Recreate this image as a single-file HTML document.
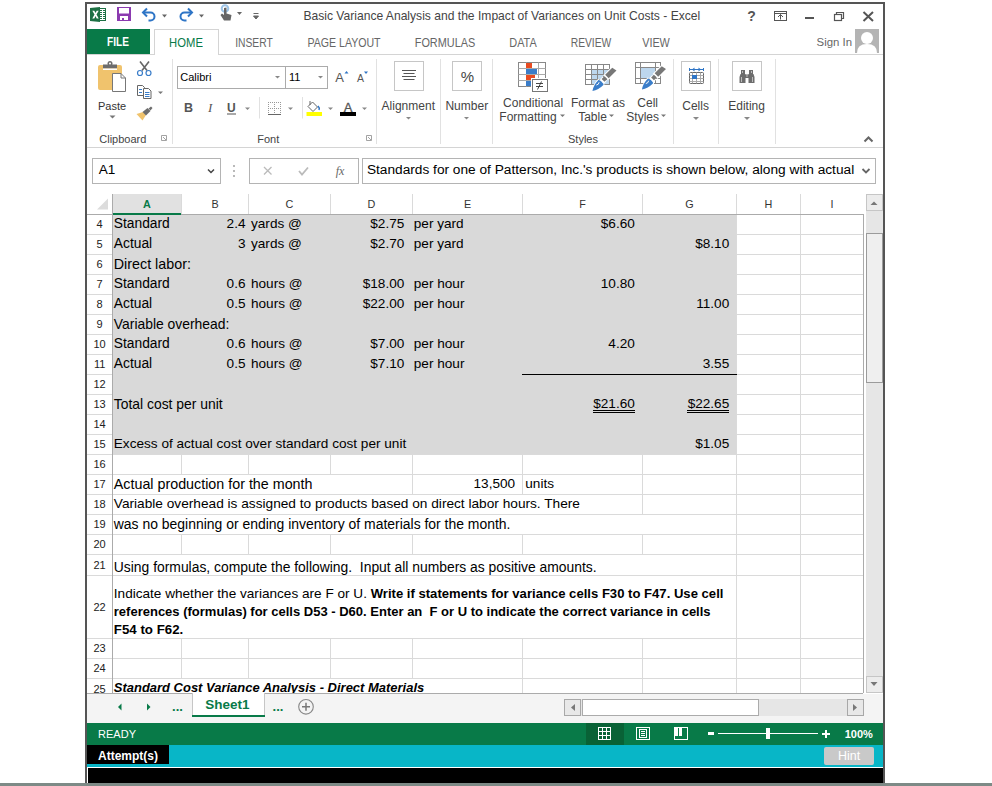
<!DOCTYPE html>
<html><head><meta charset="utf-8"><style>
html,body{margin:0;padding:0;width:992px;height:786px;overflow:hidden;background:#fff;}
body{position:relative;font-family:"Liberation Sans", sans-serif;}
.t{position:absolute;white-space:nowrap;font-family:"Liberation Sans", sans-serif;}
.r{position:absolute;}
svg{position:absolute;left:0;top:0;}
</style></head><body>
<div class="r" style="left:0px;top:0px;width:992px;height:786px;background:#fff;"></div>
<div class="r" style="left:85px;top:2px;width:800px;height:781px;background:#fff;"></div>
<div class="r" style="left:0px;top:783px;width:992px;height:3px;background:#7d8a86;"></div>
<div class="t" style="left:303.40px;top:5.51px;font-size:12.1px;line-height:20px;color:#444;font-weight:normal;font-style:normal;font-family:'Liberation Sans', sans-serif;">Basic Variance Analysis and the Impact of Variances on Unit Costs - Excel</div>
<div class="r" style="left:87px;top:29px;width:63px;height:25px;background:#087a48;"></div>
<div class="t" style="left:-182.40px;width:600px;text-align:center;top:32.03px;font-size:12.6px;line-height:20px;color:#fff;font-weight:normal;font-style:normal;font-family:'Liberation Sans', sans-serif;transform:scaleX(0.80);font-weight:bold;">FILE</div>
<div class="r" style="left:154px;top:29px;width:65px;height:26px;background:#fff;box-sizing:border-box;border:1px solid #d4d4d4;border-bottom:none;"></div>
<div class="t" style="left:-113.60px;width:600px;text-align:center;top:32.93px;font-size:12.6px;line-height:20px;color:#087a48;font-weight:normal;font-style:normal;font-family:'Liberation Sans', sans-serif;transform:scaleX(0.894);">HOME</div>
<div class="t" style="left:-45.70px;width:600px;text-align:center;top:32.93px;font-size:12.6px;line-height:20px;color:#666;font-weight:normal;font-style:normal;font-family:'Liberation Sans', sans-serif;transform:scaleX(0.818);">INSERT</div>
<div class="t" style="left:44.40px;width:600px;text-align:center;top:32.93px;font-size:12.6px;line-height:20px;color:#666;font-weight:normal;font-style:normal;font-family:'Liberation Sans', sans-serif;transform:scaleX(0.841);">PAGE LAYOUT</div>
<div class="t" style="left:145.35px;width:600px;text-align:center;top:32.93px;font-size:12.6px;line-height:20px;color:#666;font-weight:normal;font-style:normal;font-family:'Liberation Sans', sans-serif;transform:scaleX(0.864);">FORMULAS</div>
<div class="t" style="left:223.25px;width:600px;text-align:center;top:32.93px;font-size:12.6px;line-height:20px;color:#666;font-weight:normal;font-style:normal;font-family:'Liberation Sans', sans-serif;transform:scaleX(0.867);">DATA</div>
<div class="t" style="left:290.50px;width:600px;text-align:center;top:32.93px;font-size:12.6px;line-height:20px;color:#666;font-weight:normal;font-style:normal;font-family:'Liberation Sans', sans-serif;transform:scaleX(0.817);">REVIEW</div>
<div class="t" style="left:355.85px;width:600px;text-align:center;top:32.93px;font-size:12.6px;line-height:20px;color:#666;font-weight:normal;font-style:normal;font-family:'Liberation Sans', sans-serif;transform:scaleX(0.860);">VIEW</div>
<div class="r" style="left:87px;top:54px;width:67px;height:1px;background:#d4d4d4;"></div>
<div class="r" style="left:218px;top:54px;width:665px;height:1px;background:#d4d4d4;"></div>
<div class="t" style="right:140.00px;top:31.95px;font-size:11.4px;line-height:20px;color:#666;font-weight:normal;font-style:normal;font-family:'Liberation Sans', sans-serif;">Sign In</div>
<div class="r" style="left:855px;top:29px;width:24px;height:24px;background:#b4b4b4;"></div>
<div class="r" style="left:87px;top:147px;width:796px;height:1px;background:#d4d4d4;"></div>
<div class="r" style="left:172px;top:59px;width:1px;height:85px;background:#e1e1e1;"></div>
<div class="r" style="left:376px;top:59px;width:1px;height:85px;background:#e1e1e1;"></div>
<div class="r" style="left:440px;top:59px;width:1px;height:85px;background:#e1e1e1;"></div>
<div class="r" style="left:492px;top:59px;width:1px;height:85px;background:#e1e1e1;"></div>
<div class="r" style="left:673px;top:59px;width:1px;height:85px;background:#e1e1e1;"></div>
<div class="r" style="left:718px;top:59px;width:1px;height:85px;background:#e1e1e1;"></div>
<div class="r" style="left:775px;top:59px;width:1px;height:85px;background:#e1e1e1;"></div>
<div class="t" style="left:-177.20px;width:600px;text-align:center;top:129.19px;font-size:11px;line-height:20px;color:#444;font-weight:normal;font-style:normal;font-family:'Liberation Sans', sans-serif;">Clipboard</div>
<div class="t" style="left:-31.80px;width:600px;text-align:center;top:129.19px;font-size:11px;line-height:20px;color:#444;font-weight:normal;font-style:normal;font-family:'Liberation Sans', sans-serif;">Font</div>
<div class="t" style="left:283.00px;width:600px;text-align:center;top:129.19px;font-size:11px;line-height:20px;color:#444;font-weight:normal;font-style:normal;font-family:'Liberation Sans', sans-serif;">Styles</div>
<div class="t" style="left:-188.00px;width:600px;text-align:center;top:96.09px;font-size:11px;line-height:20px;color:#333;font-weight:normal;font-style:normal;font-family:'Liberation Sans', sans-serif;">Paste</div>
<div class="r" style="left:177px;top:66px;width:109px;height:23px;background:#fff;box-sizing:border-box;border:1px solid #ababab;"></div>
<div class="r" style="left:285px;top:66px;width:43px;height:23px;background:#fff;box-sizing:border-box;border:1px solid #ababab;"></div>
<div class="t" style="left:180.20px;top:66.69px;font-size:11px;line-height:20px;color:#000;font-weight:normal;font-style:normal;font-family:'Liberation Sans', sans-serif;">Calibri</div>
<div class="t" style="left:289.00px;top:66.69px;font-size:11px;line-height:20px;color:#000;font-weight:normal;font-style:normal;font-family:'Liberation Sans', sans-serif;">11</div>
<div class="t" style="left:-111.50px;width:600px;text-align:center;top:97.87px;font-size:12.5px;line-height:20px;color:#555;font-weight:bold;font-style:normal;font-family:'Liberation Sans', sans-serif;">B</div>
<div class="t" style="left:-89.80px;width:600px;text-align:center;top:97.70px;font-size:13px;line-height:20px;color:#555;font-weight:normal;font-style:italic;font-family:'Liberation Serif', serif;">I</div>
<div class="t" style="left:-68.70px;width:600px;text-align:center;top:98.04px;font-size:12px;line-height:20px;color:#555;font-weight:bold;font-style:normal;font-family:'Liberation Sans', sans-serif;">U</div>
<div class="r" style="left:394px;top:61px;width:30px;height:30px;background:#fff;box-sizing:border-box;border:1px solid #c6c6c6;"></div>
<div class="r" style="left:452px;top:61px;width:30px;height:30px;background:#fff;box-sizing:border-box;border:1px solid #c6c6c6;"></div>
<div class="t" style="left:167.50px;width:600px;text-align:center;top:66.80px;font-size:15px;line-height:20px;color:#444;font-weight:normal;font-style:normal;font-family:'Liberation Sans', sans-serif;">%</div>
<div class="t" style="left:108.30px;width:600px;text-align:center;top:95.54px;font-size:12px;line-height:20px;color:#444;font-weight:normal;font-style:normal;font-family:'Liberation Sans', sans-serif;">Alignment</div>
<div class="t" style="left:166.80px;width:600px;text-align:center;top:95.54px;font-size:12px;line-height:20px;color:#444;font-weight:normal;font-style:normal;font-family:'Liberation Sans', sans-serif;">Number</div>
<div class="t" style="left:233.10px;width:600px;text-align:center;top:92.94px;font-size:12px;line-height:20px;color:#444;font-weight:normal;font-style:normal;font-family:'Liberation Sans', sans-serif;">Conditional</div>
<div class="t" style="left:228.00px;width:600px;text-align:center;top:106.84px;font-size:12px;line-height:20px;color:#444;font-weight:normal;font-style:normal;font-family:'Liberation Sans', sans-serif;">Formatting</div>
<div class="t" style="left:298.00px;width:600px;text-align:center;top:92.94px;font-size:12px;line-height:20px;color:#444;font-weight:normal;font-style:normal;font-family:'Liberation Sans', sans-serif;">Format as</div>
<div class="t" style="left:292.50px;width:600px;text-align:center;top:106.84px;font-size:12px;line-height:20px;color:#444;font-weight:normal;font-style:normal;font-family:'Liberation Sans', sans-serif;">Table</div>
<div class="t" style="left:347.70px;width:600px;text-align:center;top:92.94px;font-size:12px;line-height:20px;color:#444;font-weight:normal;font-style:normal;font-family:'Liberation Sans', sans-serif;">Cell</div>
<div class="t" style="left:342.70px;width:600px;text-align:center;top:106.84px;font-size:12px;line-height:20px;color:#444;font-weight:normal;font-style:normal;font-family:'Liberation Sans', sans-serif;">Styles</div>
<div class="r" style="left:681px;top:61px;width:30px;height:30px;background:#fff;box-sizing:border-box;border:1px solid #c6c6c6;"></div>
<div class="r" style="left:732px;top:61px;width:30px;height:30px;background:#fff;box-sizing:border-box;border:1px solid #c6c6c6;"></div>
<div class="t" style="left:395.60px;width:600px;text-align:center;top:95.74px;font-size:12px;line-height:20px;color:#444;font-weight:normal;font-style:normal;font-family:'Liberation Sans', sans-serif;">Cells</div>
<div class="t" style="left:446.60px;width:600px;text-align:center;top:95.74px;font-size:12px;line-height:20px;color:#444;font-weight:normal;font-style:normal;font-family:'Liberation Sans', sans-serif;">Editing</div>
<div class="r" style="left:92px;top:158px;width:129px;height:26px;background:#fff;box-sizing:border-box;border:1px solid #b4b4b4;"></div>
<div class="t" style="left:98.70px;top:159.89px;font-size:13.6px;line-height:20px;color:#000;font-weight:normal;font-style:normal;font-family:'Liberation Sans', sans-serif;">A1</div>
<div class="r" style="left:249px;top:158px;width:110px;height:26px;background:#fff;box-sizing:border-box;border:1px solid #b4b4b4;"></div>
<div class="r" style="left:362px;top:158px;width:514px;height:26px;background:#fff;box-sizing:border-box;border:1px solid #b4b4b4;"></div>
<div class="t" style="left:366.90px;top:160.05px;font-size:13.7px;line-height:20px;color:#000;font-weight:normal;font-style:normal;font-family:'Liberation Sans', sans-serif;">Standards for one of Patterson, Inc.'s products is shown below, along with actual</div>
<div class="r" style="left:112px;top:194px;width:69px;height:19px;background:#e1e1e1;"></div>
<div class="r" style="left:181px;top:194px;width:1px;height:20px;background:#dadada;"></div>
<div class="r" style="left:248px;top:194px;width:1px;height:20px;background:#dadada;"></div>
<div class="r" style="left:330px;top:194px;width:1px;height:20px;background:#dadada;"></div>
<div class="r" style="left:412px;top:194px;width:1px;height:20px;background:#dadada;"></div>
<div class="r" style="left:522px;top:194px;width:1px;height:20px;background:#dadada;"></div>
<div class="r" style="left:642px;top:194px;width:1px;height:20px;background:#dadada;"></div>
<div class="r" style="left:736px;top:194px;width:1px;height:20px;background:#dadada;"></div>
<div class="r" style="left:800px;top:194px;width:1px;height:20px;background:#dadada;"></div>
<div class="r" style="left:87px;top:214px;width:776px;height:1px;background:#ababab;"></div>
<div class="r" style="left:112px;top:213px;width:69px;height:2px;background:#087a48;"></div>
<div class="t" style="left:-153.00px;width:600px;text-align:center;top:194.26px;font-size:10.8px;line-height:20px;color:#087a48;font-weight:bold;font-style:normal;font-family:'Liberation Sans', sans-serif;">A</div>
<div class="t" style="left:-85.00px;width:600px;text-align:center;top:194.26px;font-size:10.8px;line-height:20px;color:#333;font-weight:normal;font-style:normal;font-family:'Liberation Sans', sans-serif;">B</div>
<div class="t" style="left:-10.50px;width:600px;text-align:center;top:194.26px;font-size:10.8px;line-height:20px;color:#333;font-weight:normal;font-style:normal;font-family:'Liberation Sans', sans-serif;">C</div>
<div class="t" style="left:71.50px;width:600px;text-align:center;top:194.26px;font-size:10.8px;line-height:20px;color:#333;font-weight:normal;font-style:normal;font-family:'Liberation Sans', sans-serif;">D</div>
<div class="t" style="left:167.50px;width:600px;text-align:center;top:194.26px;font-size:10.8px;line-height:20px;color:#333;font-weight:normal;font-style:normal;font-family:'Liberation Sans', sans-serif;">E</div>
<div class="t" style="left:282.50px;width:600px;text-align:center;top:194.26px;font-size:10.8px;line-height:20px;color:#333;font-weight:normal;font-style:normal;font-family:'Liberation Sans', sans-serif;">F</div>
<div class="t" style="left:389.50px;width:600px;text-align:center;top:194.26px;font-size:10.8px;line-height:20px;color:#333;font-weight:normal;font-style:normal;font-family:'Liberation Sans', sans-serif;">G</div>
<div class="t" style="left:468.50px;width:600px;text-align:center;top:194.26px;font-size:10.8px;line-height:20px;color:#333;font-weight:normal;font-style:normal;font-family:'Liberation Sans', sans-serif;">H</div>
<div class="t" style="left:532.00px;width:600px;text-align:center;top:194.26px;font-size:10.8px;line-height:20px;color:#333;font-weight:normal;font-style:normal;font-family:'Liberation Sans', sans-serif;">I</div>
<div class="r" style="left:113px;top:215px;width:623px;height:239px;background:#d9d9d9;"></div>
<div class="r" style="left:87px;top:234px;width:25px;height:1px;background:#dadada;"></div>
<div class="r" style="left:737px;top:234px;width:126px;height:1px;background:#dadada;"></div>
<div class="r" style="left:87px;top:254px;width:25px;height:1px;background:#dadada;"></div>
<div class="r" style="left:737px;top:254px;width:126px;height:1px;background:#dadada;"></div>
<div class="r" style="left:87px;top:274px;width:25px;height:1px;background:#dadada;"></div>
<div class="r" style="left:737px;top:274px;width:126px;height:1px;background:#dadada;"></div>
<div class="r" style="left:87px;top:294px;width:25px;height:1px;background:#dadada;"></div>
<div class="r" style="left:737px;top:294px;width:126px;height:1px;background:#dadada;"></div>
<div class="r" style="left:87px;top:314px;width:25px;height:1px;background:#dadada;"></div>
<div class="r" style="left:737px;top:314px;width:126px;height:1px;background:#dadada;"></div>
<div class="r" style="left:87px;top:334px;width:25px;height:1px;background:#dadada;"></div>
<div class="r" style="left:737px;top:334px;width:126px;height:1px;background:#dadada;"></div>
<div class="r" style="left:87px;top:354px;width:25px;height:1px;background:#dadada;"></div>
<div class="r" style="left:737px;top:354px;width:126px;height:1px;background:#dadada;"></div>
<div class="r" style="left:87px;top:374px;width:25px;height:1px;background:#dadada;"></div>
<div class="r" style="left:737px;top:374px;width:126px;height:1px;background:#dadada;"></div>
<div class="r" style="left:87px;top:394px;width:25px;height:1px;background:#dadada;"></div>
<div class="r" style="left:737px;top:394px;width:126px;height:1px;background:#dadada;"></div>
<div class="r" style="left:87px;top:414px;width:25px;height:1px;background:#dadada;"></div>
<div class="r" style="left:737px;top:414px;width:126px;height:1px;background:#dadada;"></div>
<div class="r" style="left:87px;top:434px;width:25px;height:1px;background:#dadada;"></div>
<div class="r" style="left:737px;top:434px;width:126px;height:1px;background:#dadada;"></div>
<div class="r" style="left:87px;top:454px;width:25px;height:1px;background:#dadada;"></div>
<div class="r" style="left:113px;top:454px;width:750px;height:1px;background:#dadada;"></div>
<div class="r" style="left:87px;top:474px;width:25px;height:1px;background:#dadada;"></div>
<div class="r" style="left:113px;top:474px;width:750px;height:1px;background:#dadada;"></div>
<div class="r" style="left:87px;top:494px;width:25px;height:1px;background:#dadada;"></div>
<div class="r" style="left:113px;top:494px;width:750px;height:1px;background:#dadada;"></div>
<div class="r" style="left:87px;top:514px;width:25px;height:1px;background:#dadada;"></div>
<div class="r" style="left:113px;top:514px;width:750px;height:1px;background:#dadada;"></div>
<div class="r" style="left:87px;top:534px;width:25px;height:1px;background:#dadada;"></div>
<div class="r" style="left:113px;top:534px;width:750px;height:1px;background:#dadada;"></div>
<div class="r" style="left:87px;top:554px;width:25px;height:1px;background:#dadada;"></div>
<div class="r" style="left:113px;top:554px;width:750px;height:1px;background:#dadada;"></div>
<div class="r" style="left:87px;top:575px;width:25px;height:1px;background:#dadada;"></div>
<div class="r" style="left:113px;top:575px;width:750px;height:1px;background:#dadada;"></div>
<div class="r" style="left:87px;top:638px;width:25px;height:1px;background:#dadada;"></div>
<div class="r" style="left:113px;top:638px;width:750px;height:1px;background:#dadada;"></div>
<div class="r" style="left:87px;top:658px;width:25px;height:1px;background:#dadada;"></div>
<div class="r" style="left:113px;top:658px;width:750px;height:1px;background:#dadada;"></div>
<div class="r" style="left:87px;top:678px;width:25px;height:1px;background:#dadada;"></div>
<div class="r" style="left:113px;top:678px;width:750px;height:1px;background:#dadada;"></div>
<div class="r" style="left:87px;top:693px;width:776px;height:1px;background:#ababab;"></div>
<div class="r" style="left:112px;top:194px;width:1px;height:499px;background:#ababab;"></div>
<div class="r" style="left:863px;top:214px;width:1px;height:479px;background:#ababab;"></div>
<div class="r" style="left:736px;top:215px;width:1px;height:478px;background:#dadada;"></div>
<div class="r" style="left:800px;top:215px;width:1px;height:478px;background:#dadada;"></div>
<div class="r" style="left:181px;top:455px;width:1px;height:19px;background:#dadada;"></div>
<div class="r" style="left:248px;top:455px;width:1px;height:19px;background:#dadada;"></div>
<div class="r" style="left:330px;top:455px;width:1px;height:19px;background:#dadada;"></div>
<div class="r" style="left:412px;top:455px;width:1px;height:19px;background:#dadada;"></div>
<div class="r" style="left:522px;top:455px;width:1px;height:19px;background:#dadada;"></div>
<div class="r" style="left:642px;top:455px;width:1px;height:19px;background:#dadada;"></div>
<div class="r" style="left:181px;top:535px;width:1px;height:19px;background:#dadada;"></div>
<div class="r" style="left:248px;top:535px;width:1px;height:19px;background:#dadada;"></div>
<div class="r" style="left:330px;top:535px;width:1px;height:19px;background:#dadada;"></div>
<div class="r" style="left:412px;top:535px;width:1px;height:19px;background:#dadada;"></div>
<div class="r" style="left:522px;top:535px;width:1px;height:19px;background:#dadada;"></div>
<div class="r" style="left:642px;top:535px;width:1px;height:19px;background:#dadada;"></div>
<div class="r" style="left:181px;top:639px;width:1px;height:19px;background:#dadada;"></div>
<div class="r" style="left:248px;top:639px;width:1px;height:19px;background:#dadada;"></div>
<div class="r" style="left:330px;top:639px;width:1px;height:19px;background:#dadada;"></div>
<div class="r" style="left:412px;top:639px;width:1px;height:19px;background:#dadada;"></div>
<div class="r" style="left:522px;top:639px;width:1px;height:19px;background:#dadada;"></div>
<div class="r" style="left:642px;top:639px;width:1px;height:19px;background:#dadada;"></div>
<div class="r" style="left:181px;top:659px;width:1px;height:19px;background:#dadada;"></div>
<div class="r" style="left:248px;top:659px;width:1px;height:19px;background:#dadada;"></div>
<div class="r" style="left:330px;top:659px;width:1px;height:19px;background:#dadada;"></div>
<div class="r" style="left:412px;top:659px;width:1px;height:19px;background:#dadada;"></div>
<div class="r" style="left:522px;top:659px;width:1px;height:19px;background:#dadada;"></div>
<div class="r" style="left:642px;top:659px;width:1px;height:19px;background:#dadada;"></div>
<div class="r" style="left:412px;top:475px;width:1px;height:19px;background:#dadada;"></div>
<div class="r" style="left:522px;top:475px;width:1px;height:19px;background:#dadada;"></div>
<div class="r" style="left:642px;top:475px;width:1px;height:19px;background:#dadada;"></div>
<div class="r" style="left:642px;top:495px;width:1px;height:19px;background:#dadada;"></div>
<div class="r" style="left:522px;top:679px;width:1px;height:14px;background:#dadada;"></div>
<div class="r" style="left:642px;top:679px;width:1px;height:14px;background:#dadada;"></div>
<div class="t" style="left:-200.40px;width:600px;text-align:center;top:214.39px;font-size:11px;line-height:20px;color:#222;font-weight:normal;font-style:normal;font-family:'Liberation Sans', sans-serif;">4</div>
<div class="t" style="left:-200.40px;width:600px;text-align:center;top:234.39px;font-size:11px;line-height:20px;color:#222;font-weight:normal;font-style:normal;font-family:'Liberation Sans', sans-serif;">5</div>
<div class="t" style="left:-200.40px;width:600px;text-align:center;top:254.39px;font-size:11px;line-height:20px;color:#222;font-weight:normal;font-style:normal;font-family:'Liberation Sans', sans-serif;">6</div>
<div class="t" style="left:-200.40px;width:600px;text-align:center;top:274.39px;font-size:11px;line-height:20px;color:#222;font-weight:normal;font-style:normal;font-family:'Liberation Sans', sans-serif;">7</div>
<div class="t" style="left:-200.40px;width:600px;text-align:center;top:294.39px;font-size:11px;line-height:20px;color:#222;font-weight:normal;font-style:normal;font-family:'Liberation Sans', sans-serif;">8</div>
<div class="t" style="left:-200.40px;width:600px;text-align:center;top:314.39px;font-size:11px;line-height:20px;color:#222;font-weight:normal;font-style:normal;font-family:'Liberation Sans', sans-serif;">9</div>
<div class="t" style="left:-200.40px;width:600px;text-align:center;top:334.39px;font-size:11px;line-height:20px;color:#222;font-weight:normal;font-style:normal;font-family:'Liberation Sans', sans-serif;">10</div>
<div class="t" style="left:-200.40px;width:600px;text-align:center;top:354.39px;font-size:11px;line-height:20px;color:#222;font-weight:normal;font-style:normal;font-family:'Liberation Sans', sans-serif;">11</div>
<div class="t" style="left:-200.40px;width:600px;text-align:center;top:374.39px;font-size:11px;line-height:20px;color:#222;font-weight:normal;font-style:normal;font-family:'Liberation Sans', sans-serif;">12</div>
<div class="t" style="left:-200.40px;width:600px;text-align:center;top:394.39px;font-size:11px;line-height:20px;color:#222;font-weight:normal;font-style:normal;font-family:'Liberation Sans', sans-serif;">13</div>
<div class="t" style="left:-200.40px;width:600px;text-align:center;top:414.39px;font-size:11px;line-height:20px;color:#222;font-weight:normal;font-style:normal;font-family:'Liberation Sans', sans-serif;">14</div>
<div class="t" style="left:-200.40px;width:600px;text-align:center;top:434.39px;font-size:11px;line-height:20px;color:#222;font-weight:normal;font-style:normal;font-family:'Liberation Sans', sans-serif;">15</div>
<div class="t" style="left:-200.40px;width:600px;text-align:center;top:454.39px;font-size:11px;line-height:20px;color:#222;font-weight:normal;font-style:normal;font-family:'Liberation Sans', sans-serif;">16</div>
<div class="t" style="left:-200.40px;width:600px;text-align:center;top:474.39px;font-size:11px;line-height:20px;color:#222;font-weight:normal;font-style:normal;font-family:'Liberation Sans', sans-serif;">17</div>
<div class="t" style="left:-200.40px;width:600px;text-align:center;top:494.39px;font-size:11px;line-height:20px;color:#222;font-weight:normal;font-style:normal;font-family:'Liberation Sans', sans-serif;">18</div>
<div class="t" style="left:-200.40px;width:600px;text-align:center;top:514.39px;font-size:11px;line-height:20px;color:#222;font-weight:normal;font-style:normal;font-family:'Liberation Sans', sans-serif;">19</div>
<div class="t" style="left:-200.40px;width:600px;text-align:center;top:534.39px;font-size:11px;line-height:20px;color:#222;font-weight:normal;font-style:normal;font-family:'Liberation Sans', sans-serif;">20</div>
<div class="t" style="left:-200.40px;width:600px;text-align:center;top:554.89px;font-size:11px;line-height:20px;color:#222;font-weight:normal;font-style:normal;font-family:'Liberation Sans', sans-serif;">21</div>
<div class="t" style="left:-200.40px;width:600px;text-align:center;top:596.89px;font-size:11px;line-height:20px;color:#222;font-weight:normal;font-style:normal;font-family:'Liberation Sans', sans-serif;">22</div>
<div class="t" style="left:-200.40px;width:600px;text-align:center;top:638.39px;font-size:11px;line-height:20px;color:#222;font-weight:normal;font-style:normal;font-family:'Liberation Sans', sans-serif;">23</div>
<div class="t" style="left:-200.40px;width:600px;text-align:center;top:658.39px;font-size:11px;line-height:20px;color:#222;font-weight:normal;font-style:normal;font-family:'Liberation Sans', sans-serif;">24</div>
<div class="t" style="left:-200.40px;width:600px;text-align:center;top:678.69px;font-size:11px;line-height:20px;color:#222;font-weight:normal;font-style:normal;font-family:'Liberation Sans', sans-serif;">25</div>
<div class="t" style="left:113.80px;top:214.02px;font-size:13.8px;line-height:20px;color:#000;font-weight:normal;font-style:normal;font-family:'Liberation Sans', sans-serif;">Standard</div>
<div class="t" style="left:113.80px;top:234.02px;font-size:13.8px;line-height:20px;color:#000;font-weight:normal;font-style:normal;font-family:'Liberation Sans', sans-serif;">Actual</div>
<div class="t" style="left:113.80px;top:253.85px;font-size:14.3px;line-height:20px;color:#000;font-weight:normal;font-style:normal;font-family:'Liberation Sans', sans-serif;">Direct labor:</div>
<div class="t" style="left:113.80px;top:274.02px;font-size:13.8px;line-height:20px;color:#000;font-weight:normal;font-style:normal;font-family:'Liberation Sans', sans-serif;">Standard</div>
<div class="t" style="left:113.80px;top:294.02px;font-size:13.8px;line-height:20px;color:#000;font-weight:normal;font-style:normal;font-family:'Liberation Sans', sans-serif;">Actual</div>
<div class="t" style="left:113.80px;top:313.98px;font-size:13.9px;line-height:20px;color:#000;font-weight:normal;font-style:normal;font-family:'Liberation Sans', sans-serif;">Variable overhead:</div>
<div class="t" style="left:113.80px;top:334.02px;font-size:13.8px;line-height:20px;color:#000;font-weight:normal;font-style:normal;font-family:'Liberation Sans', sans-serif;">Standard</div>
<div class="t" style="left:113.80px;top:354.02px;font-size:13.8px;line-height:20px;color:#000;font-weight:normal;font-style:normal;font-family:'Liberation Sans', sans-serif;">Actual</div>
<div class="t" style="left:113.80px;top:393.98px;font-size:13.9px;line-height:20px;color:#000;font-weight:normal;font-style:normal;font-family:'Liberation Sans', sans-serif;">Total cost per unit</div>
<div class="t" style="left:113.80px;top:434.09px;font-size:13.6px;line-height:20px;color:#000;font-weight:normal;font-style:normal;font-family:'Liberation Sans', sans-serif;">Excess of actual cost over standard cost per unit</div>
<div class="t" style="left:113.80px;top:473.85px;font-size:14.3px;line-height:20px;color:#000;font-weight:normal;font-style:normal;font-family:'Liberation Sans', sans-serif;">Actual production for the month</div>
<div class="t" style="left:113.80px;top:494.06px;font-size:13.68px;line-height:20px;color:#000;font-weight:normal;font-style:normal;font-family:'Liberation Sans', sans-serif;">Variable overhead is assigned to products based on direct labor hours. There</div>
<div class="t" style="left:113.80px;top:513.97px;font-size:13.95px;line-height:20px;color:#000;font-weight:normal;font-style:normal;font-family:'Liberation Sans', sans-serif;">was no beginning or ending inventory of materials for the month.</div>
<div class="t" style="right:746.50px;top:214.09px;font-size:13.6px;line-height:20px;color:#000;font-weight:normal;font-style:normal;font-family:'Liberation Sans', sans-serif;">2.4</div>
<div class="t" style="right:746.50px;top:234.09px;font-size:13.6px;line-height:20px;color:#000;font-weight:normal;font-style:normal;font-family:'Liberation Sans', sans-serif;">3</div>
<div class="t" style="right:746.50px;top:274.09px;font-size:13.6px;line-height:20px;color:#000;font-weight:normal;font-style:normal;font-family:'Liberation Sans', sans-serif;">0.6</div>
<div class="t" style="right:746.50px;top:294.09px;font-size:13.6px;line-height:20px;color:#000;font-weight:normal;font-style:normal;font-family:'Liberation Sans', sans-serif;">0.5</div>
<div class="t" style="right:746.50px;top:334.09px;font-size:13.6px;line-height:20px;color:#000;font-weight:normal;font-style:normal;font-family:'Liberation Sans', sans-serif;">0.6</div>
<div class="t" style="right:746.50px;top:354.09px;font-size:13.6px;line-height:20px;color:#000;font-weight:normal;font-style:normal;font-family:'Liberation Sans', sans-serif;">0.5</div>
<div class="t" style="left:251.00px;top:214.09px;font-size:13.6px;line-height:20px;color:#000;font-weight:normal;font-style:normal;font-family:'Liberation Sans', sans-serif;">yards @</div>
<div class="t" style="left:251.00px;top:234.09px;font-size:13.6px;line-height:20px;color:#000;font-weight:normal;font-style:normal;font-family:'Liberation Sans', sans-serif;">yards @</div>
<div class="t" style="left:251.00px;top:274.09px;font-size:13.6px;line-height:20px;color:#000;font-weight:normal;font-style:normal;font-family:'Liberation Sans', sans-serif;">hours @</div>
<div class="t" style="left:251.00px;top:294.09px;font-size:13.6px;line-height:20px;color:#000;font-weight:normal;font-style:normal;font-family:'Liberation Sans', sans-serif;">hours @</div>
<div class="t" style="left:251.00px;top:334.09px;font-size:13.6px;line-height:20px;color:#000;font-weight:normal;font-style:normal;font-family:'Liberation Sans', sans-serif;">hours @</div>
<div class="t" style="left:251.00px;top:354.09px;font-size:13.6px;line-height:20px;color:#000;font-weight:normal;font-style:normal;font-family:'Liberation Sans', sans-serif;">hours @</div>
<div class="t" style="right:587.70px;top:214.09px;font-size:13.6px;line-height:20px;color:#000;font-weight:normal;font-style:normal;font-family:'Liberation Sans', sans-serif;">$2.75</div>
<div class="t" style="right:587.70px;top:234.09px;font-size:13.6px;line-height:20px;color:#000;font-weight:normal;font-style:normal;font-family:'Liberation Sans', sans-serif;">$2.70</div>
<div class="t" style="right:587.70px;top:274.09px;font-size:13.6px;line-height:20px;color:#000;font-weight:normal;font-style:normal;font-family:'Liberation Sans', sans-serif;">$18.00</div>
<div class="t" style="right:587.70px;top:294.09px;font-size:13.6px;line-height:20px;color:#000;font-weight:normal;font-style:normal;font-family:'Liberation Sans', sans-serif;">$22.00</div>
<div class="t" style="right:587.70px;top:334.09px;font-size:13.6px;line-height:20px;color:#000;font-weight:normal;font-style:normal;font-family:'Liberation Sans', sans-serif;">$7.00</div>
<div class="t" style="right:587.70px;top:354.09px;font-size:13.6px;line-height:20px;color:#000;font-weight:normal;font-style:normal;font-family:'Liberation Sans', sans-serif;">$7.10</div>
<div class="t" style="left:413.80px;top:214.09px;font-size:13.6px;line-height:20px;color:#000;font-weight:normal;font-style:normal;font-family:'Liberation Sans', sans-serif;">per yard</div>
<div class="t" style="left:413.80px;top:234.09px;font-size:13.6px;line-height:20px;color:#000;font-weight:normal;font-style:normal;font-family:'Liberation Sans', sans-serif;">per yard</div>
<div class="t" style="left:413.80px;top:274.09px;font-size:13.6px;line-height:20px;color:#000;font-weight:normal;font-style:normal;font-family:'Liberation Sans', sans-serif;">per hour</div>
<div class="t" style="left:413.80px;top:294.09px;font-size:13.6px;line-height:20px;color:#000;font-weight:normal;font-style:normal;font-family:'Liberation Sans', sans-serif;">per hour</div>
<div class="t" style="left:413.80px;top:334.09px;font-size:13.6px;line-height:20px;color:#000;font-weight:normal;font-style:normal;font-family:'Liberation Sans', sans-serif;">per hour</div>
<div class="t" style="left:413.80px;top:354.09px;font-size:13.6px;line-height:20px;color:#000;font-weight:normal;font-style:normal;font-family:'Liberation Sans', sans-serif;">per hour</div>
<div class="t" style="right:357.20px;top:214.09px;font-size:13.6px;line-height:20px;color:#000;font-weight:normal;font-style:normal;font-family:'Liberation Sans', sans-serif;">$6.60</div>
<div class="t" style="right:357.20px;top:274.09px;font-size:13.6px;line-height:20px;color:#000;font-weight:normal;font-style:normal;font-family:'Liberation Sans', sans-serif;">10.80</div>
<div class="t" style="right:357.20px;top:334.09px;font-size:13.6px;line-height:20px;color:#000;font-weight:normal;font-style:normal;font-family:'Liberation Sans', sans-serif;">4.20</div>
<div class="t" style="right:357.20px;top:394.09px;font-size:13.6px;line-height:20px;color:#000;font-weight:normal;font-style:normal;font-family:'Liberation Sans', sans-serif;">$21.60</div>
<div class="t" style="right:262.80px;top:234.09px;font-size:13.6px;line-height:20px;color:#000;font-weight:normal;font-style:normal;font-family:'Liberation Sans', sans-serif;">$8.10</div>
<div class="t" style="right:262.80px;top:294.09px;font-size:13.6px;line-height:20px;color:#000;font-weight:normal;font-style:normal;font-family:'Liberation Sans', sans-serif;">11.00</div>
<div class="t" style="right:262.80px;top:354.09px;font-size:13.6px;line-height:20px;color:#000;font-weight:normal;font-style:normal;font-family:'Liberation Sans', sans-serif;">3.55</div>
<div class="t" style="right:262.80px;top:394.09px;font-size:13.6px;line-height:20px;color:#000;font-weight:normal;font-style:normal;font-family:'Liberation Sans', sans-serif;">$22.65</div>
<div class="t" style="right:262.80px;top:434.09px;font-size:13.6px;line-height:20px;color:#000;font-weight:normal;font-style:normal;font-family:'Liberation Sans', sans-serif;">$1.05</div>
<div class="r" style="left:522px;top:374px;width:215px;height:1px;background:#000;"></div>
<div class="r" style="left:593px;top:410px;width:42px;height:1px;background:#000;"></div>
<div class="r" style="left:593px;top:412px;width:42px;height:1px;background:#000;"></div>
<div class="r" style="left:687px;top:410px;width:42px;height:1px;background:#000;"></div>
<div class="r" style="left:687px;top:412px;width:42px;height:1px;background:#000;"></div>
<div class="t" style="right:476.90px;top:474.09px;font-size:13.6px;line-height:20px;color:#000;font-weight:normal;font-style:normal;font-family:'Liberation Sans', sans-serif;">13,500</div>
<div class="t" style="left:525.30px;top:474.09px;font-size:13.6px;line-height:20px;color:#000;font-weight:normal;font-style:normal;font-family:'Liberation Sans', sans-serif;">units</div>
<div class="t" style="left:113.80px;top:556.99px;font-size:13.88px;line-height:20px;color:#000;font-weight:normal;font-style:normal;font-family:'Liberation Sans', sans-serif;">Using formulas, compute the following. &nbsp;Input all numbers as positive amounts.</div>
<div class="t" style="left:113.80px;top:583.99px;font-size:13.6px;line-height:20px;color:#000;font-weight:normal;font-style:normal;font-family:'Liberation Sans', sans-serif;">Indicate whether the variances are F or U. <b style="font-size:13.1px">Write if statements for variance cells F30 to F47. Use cell</b></div>
<div class="t" style="left:113.80px;top:602.00px;font-size:13.0px;line-height:20px;color:#000;font-weight:bold;font-style:normal;font-family:'Liberation Sans', sans-serif;">references (formulas) for cells D53 - D60. Enter an &nbsp;F or U to indicate the correct variance in cells</div>
<div class="t" style="left:113.80px;top:620.09px;font-size:13.3px;line-height:20px;color:#000;font-weight:bold;font-style:normal;font-family:'Liberation Sans', sans-serif;">F54 to F62.</div>
<div class="r" style="left:113px;top:679px;width:750px;height:14px;overflow:hidden">
<div class="t" style="left:0.80px;top:-1.19px;font-size:12.97px;line-height:20px;color:#000;font-weight:bold;font-style:italic;font-family:'Liberation Sans', sans-serif;">Standard Cost Variance Analysis - Direct Materials</div>
</div>
<div class="r" style="left:866px;top:194px;width:17px;height:499px;background:#e6e6e6;"></div>
<div class="r" style="left:866px;top:194px;width:17px;height:17px;background:#ececec;box-sizing:border-box;border:1px solid #c6c6c6;"></div>
<div class="r" style="left:866px;top:233px;width:17px;height:150px;background:#efefef;box-sizing:border-box;border:1px solid #9b9b9b;"></div>
<div class="r" style="left:866px;top:676px;width:17px;height:17px;background:#ececec;box-sizing:border-box;border:1px solid #c6c6c6;"></div>
<div class="r" style="left:87px;top:694px;width:796px;height:29px;background:#f4f4f4;"></div>
<div class="r" style="left:192px;top:693px;width:73px;height:24px;background:#fff;box-sizing:border-box;border:1px solid #c6c6c6;border-top:none;"></div>
<div class="r" style="left:192px;top:715px;width:73px;height:2px;background:#087a48;"></div>
<div class="t" style="left:-72.60px;width:600px;text-align:center;top:695.22px;font-size:13.5px;line-height:20px;color:#087a48;font-weight:bold;font-style:normal;font-family:'Liberation Sans', sans-serif;">Sheet1</div>
<div class="t" style="left:-122.50px;width:600px;text-align:center;top:696.50px;font-size:13px;line-height:20px;color:#087a48;font-weight:bold;font-style:normal;font-family:'Liberation Sans', sans-serif;">...</div>
<div class="t" style="left:-22.00px;width:600px;text-align:center;top:696.50px;font-size:13px;line-height:20px;color:#087a48;font-weight:bold;font-style:normal;font-family:'Liberation Sans', sans-serif;">...</div>
<div class="r" style="left:564px;top:699px;width:17px;height:17px;background:#e8e8e8;box-sizing:border-box;border:1px solid #a8a8a8;"></div>
<div class="r" style="left:581px;top:699px;width:266px;height:17px;background:#e6e6e6;"></div>
<div class="r" style="left:582px;top:699px;width:177px;height:17px;background:#fff;box-sizing:border-box;border:1px solid #ababab;"></div>
<div class="r" style="left:847px;top:699px;width:17px;height:17px;background:#e8e8e8;box-sizing:border-box;border:1px solid #a8a8a8;"></div>
<div class="r" style="left:87px;top:723px;width:796px;height:22px;background:#087a48;"></div>
<div class="r" style="left:586px;top:723px;width:38px;height:22px;background:#096236;"></div>
<div class="t" style="left:98.10px;top:724.39px;font-size:11px;line-height:20px;color:#fff;font-weight:normal;font-style:normal;font-family:'Liberation Sans', sans-serif;">READY</div>
<div class="t" style="right:119.20px;top:724.29px;font-size:11px;line-height:20px;color:#fff;font-weight:bold;font-style:normal;font-family:'Liberation Sans', sans-serif;">100%</div>
<div class="r" style="left:718px;top:733px;width:100px;height:1px;background:#fff;"></div>
<div class="r" style="left:766px;top:728px;width:4px;height:11px;background:#fff;"></div>
<div class="r" style="left:708px;top:732px;width:6px;height:3px;background:#fff;"></div>
<div class="r" style="left:822px;top:733px;width:8px;height:2px;background:#fff;"></div>
<div class="r" style="left:825px;top:730px;width:2px;height:8px;background:#fff;"></div>
<div class="r" style="left:87px;top:745px;width:796px;height:22px;background:#08b6c7;"></div>
<div class="r" style="left:87px;top:745px;width:82px;height:19px;background:#000;"></div>
<div class="t" style="left:98.00px;top:745.84px;font-size:12px;line-height:20px;color:#fff;font-weight:bold;font-style:normal;font-family:'Liberation Sans', sans-serif;">Attempt(s)</div>
<div class="r" style="left:824px;top:747px;width:50px;height:18px;background:#c9c9c9;border-radius:2px;"></div>
<div class="t" style="left:549.00px;width:600px;text-align:center;top:746.37px;font-size:12.5px;line-height:20px;color:#fff;font-weight:normal;font-style:normal;font-family:'Liberation Sans', sans-serif;">Hint</div>
<div class="r" style="left:87px;top:767px;width:796px;height:1px;background:#fff;"></div>
<div class="r" style="left:88px;top:768px;width:795px;height:15px;background:#000;"></div>
<div class="r" style="left:85px;top:2px;width:800px;height:2px;background:#555;"></div>
<div class="r" style="left:85px;top:2px;width:2px;height:781px;background:#555;"></div>
<div class="r" style="left:883px;top:2px;width:2px;height:781px;background:#555;"></div>
<svg width="992" height="786" viewBox="0 0 992 786">
<!-- excel logo -->
<rect x="99.5" y="8.5" width="6" height="12" fill="#fff" stroke="#1d7044" stroke-width="1"/>
<g fill="#1d7044"><rect x="100" y="10" width="2" height="1"/><rect x="103" y="10" width="2" height="1"/><rect x="100" y="12" width="2" height="1"/><rect x="103" y="12" width="2" height="1"/><rect x="100" y="14" width="2" height="1"/><rect x="103" y="14" width="2" height="1"/><rect x="100" y="16" width="2" height="1"/><rect x="103" y="16" width="2" height="1"/><rect x="100" y="18" width="2" height="1"/><rect x="103" y="18" width="2" height="1"/></g>
<path d="M90 8 L100 7 V22 L90 21Z" fill="#1d7044"/>
<path d="M92.3 10.8 h2 l1.2 2.3 l1.2 -2.3 h2 l-2.2 3.8 l2.2 3.9 h-2 l-1.2 -2.4 l-1.2 2.4 h-2 l2.2 -3.9z" fill="#fff"/>
<!-- save -->
<path d="M117 7h14v14h-14z" fill="#8b3ab0"/>
<rect x="119" y="8" width="10" height="5.5" fill="#fff"/>
<rect x="120" y="16" width="8" height="4" fill="#fff"/>
<rect x="122" y="18" width="2" height="2" fill="#8b3ab0"/>
<!-- undo -->
<path d="M147 8.5 l-4 4 l4 4" fill="none" stroke="#2e75c6" stroke-width="2"/>
<path d="M143.5 12.5 H150.5 a4 4 0 0 1 0 8 h-2" fill="none" stroke="#2e75c6" stroke-width="2"/>
<path d="M162 14.5h5l-2.5 3z" fill="#666"/>
<!-- redo -->
<path d="M188 8.5 l4 4 l-4 4" fill="none" stroke="#2e75c6" stroke-width="2"/>
<path d="M191.5 12.5 H184.5 a4 4 0 0 0 0 8 h2" fill="none" stroke="#2e75c6" stroke-width="2"/>
<path d="M199 14.5h5l-2.5 3z" fill="#666"/>
<!-- touch -->
<circle cx="225" cy="8.5" r="3.3" fill="none" stroke="#9cc3e6" stroke-width="2"/>
<path d="M224 8 v7 l-2 -1.5 l-1.5 1.5 l3.5 5.5 h6.5 l1 -5.5 l-5 -1.5 v-6z" fill="#666"/>
<path d="M237 12h5l-2.5 3z" fill="#666"/>
<path d="M253.5 13.5h5M253.5 16h5l-2.5 3z" fill="#666" stroke="#666" stroke-width="1"/>
<!-- title right icons -->
<text x="751.5" y="21" font-family="Liberation Sans" font-weight="bold" font-size="14" fill="#555" text-anchor="middle">?</text>
<rect x="774.5" y="11.5" width="12" height="9" fill="none" stroke="#555" stroke-width="1"/>
<path d="M774.5 13.5h12" stroke="#555" stroke-width="1"/>
<path d="M780.5 19.5v-5M778 17l2.5-2.5 2.5 2.5" fill="none" stroke="#555" stroke-width="1"/>
<rect x="805" y="17" width="9" height="2" fill="#555"/>
<rect x="834.5" y="14.5" width="7" height="6" fill="none" stroke="#555" stroke-width="1.2"/>
<path d="M836.5 14.5v-2h7v6h-2" fill="none" stroke="#555" stroke-width="1.2"/>
<path d="M863.5 12l9.5 9M873 12l-9.5 9" stroke="#555" stroke-width="2"/>
<!-- avatar -->
<circle cx="867" cy="38" r="6" fill="#fff"/>
<path d="M857 53 q0 -9 10 -9 q10 0 10 9z" fill="#fff"/>
<!-- paste -->
<rect x="98" y="65" width="24" height="25" rx="2" fill="#f0c36d"/>
<rect x="103" y="64.5" width="14" height="4" fill="#6d6d6d"/>
<circle cx="110" cy="63.5" r="2.5" fill="#6d6d6d"/>
<circle cx="110" cy="63.5" r="1" fill="#fff"/>
<rect x="103" y="68.5" width="14" height="1.5" fill="#fff"/>
<path d="M112.5 73.5 h8.5 l4.5 4.5 v13.5 h-13z" fill="#fff" stroke="#777" stroke-width="1"/>
<path d="M121 73.5 v4.5 h4.5" fill="none" stroke="#777" stroke-width="1"/>
<path d="M109.5 115.5h6l-3 3z" fill="#777"/>
<!-- scissors -->
<path d="M140 61.5 l7 9 M149 61.5 l-7 9" stroke="#666" stroke-width="1.6"/>
<circle cx="140" cy="73" r="2.5" fill="none" stroke="#3a7dc9" stroke-width="1.2"/>
<circle cx="148.5" cy="73" r="2.5" fill="none" stroke="#3a7dc9" stroke-width="1.2"/>
<!-- copy -->
<path d="M137.5 85.5 h5 l2 2 v8 h-7z" fill="#fff" stroke="#666" stroke-width="1"/>
<path d="M143.5 88.5 h5 l2.5 2.5 v7.5 h-7.5z" fill="#fff" stroke="#666" stroke-width="1"/>
<path d="M139 89.5h3M139 92.5h3M145 92.5h4.5M145 94.5h4.5M145 96.5h4.5" stroke="#3a7dc9" stroke-width="1"/>
<path d="M158 91.5h5l-2.5 2.5z" fill="#777"/>
<!-- format painter -->
<path d="M136.5 114 l6.5 -2 l3 3 l-3.5 5.5z" fill="#f0c36d"/>
<path d="M142.5 112 l5 -4 l3 3 l-4.5 4.5z" fill="#6d6d6d"/>
<path d="M148.5 108.5 l2.5 -2 l1.5 1.5 l-2 2.5z" fill="#6d6d6d"/>
<!-- font dropdown arrows -->
<path d="M275 76h5l-2.5 2.5z" fill="#888"/>
<path d="M318 76h5l-2.5 2.5z" fill="#888"/>
<!-- grow/shrink font -->
<text x="339.5" y="82" font-family="Liberation Sans" font-size="13" fill="#555" text-anchor="middle">A</text>
<path d="M344.5 73.5h4l-2 -2.5z" fill="#2e75c6"/>
<text x="360.5" y="82" font-family="Liberation Sans" font-size="10.5" fill="#555" text-anchor="middle">A</text>
<path d="M364 71.5h4l-2 2.5z" fill="#2e75c6"/>
<!-- underline bar -->
<rect x="227" y="113.5" width="9" height="1" fill="#555"/>
<path d="M245 107.5h5l-2.5 2.5z" fill="#888"/>
<path d="M259.5 97v21.5" stroke="#e1e1e1" stroke-width="1"/>
<!-- border icon -->
<g fill="#999"><rect x="268" y="102" width="1" height="1"/><rect x="270" y="102" width="1" height="1"/><rect x="272" y="102" width="1" height="1"/><rect x="274" y="102" width="1" height="1"/><rect x="276" y="102" width="1" height="1"/><rect x="278" y="102" width="1" height="1"/><rect x="280" y="102" width="1" height="1"/><rect x="268" y="108" width="1" height="1"/><rect x="270" y="108" width="1" height="1"/><rect x="272" y="108" width="1" height="1"/><rect x="274" y="108" width="1" height="1"/><rect x="276" y="108" width="1" height="1"/><rect x="278" y="108" width="1" height="1"/><rect x="280" y="108" width="1" height="1"/><rect x="268" y="114" width="1" height="1"/><rect x="270" y="114" width="1" height="1"/><rect x="272" y="114" width="1" height="1"/><rect x="274" y="114" width="1" height="1"/><rect x="276" y="114" width="1" height="1"/><rect x="278" y="114" width="1" height="1"/><rect x="280" y="114" width="1" height="1"/><rect x="268" y="102" width="1" height="1"/><rect x="268" y="104" width="1" height="1"/><rect x="268" y="106" width="1" height="1"/><rect x="268" y="108" width="1" height="1"/><rect x="268" y="110" width="1" height="1"/><rect x="268" y="112" width="1" height="1"/><rect x="268" y="114" width="1" height="1"/><rect x="274" y="102" width="1" height="1"/><rect x="274" y="104" width="1" height="1"/><rect x="274" y="106" width="1" height="1"/><rect x="274" y="108" width="1" height="1"/><rect x="274" y="110" width="1" height="1"/><rect x="274" y="112" width="1" height="1"/><rect x="274" y="114" width="1" height="1"/><rect x="280" y="102" width="1" height="1"/><rect x="280" y="104" width="1" height="1"/><rect x="280" y="106" width="1" height="1"/><rect x="280" y="108" width="1" height="1"/><rect x="280" y="110" width="1" height="1"/><rect x="280" y="112" width="1" height="1"/><rect x="280" y="114" width="1" height="1"/></g>
<rect x="268" y="114" width="13" height="1" fill="#666"/>
<path d="M288 107.5h5l-2.5 2.5z" fill="#888"/>
<path d="M302.5 97v21.5" stroke="#e1e1e1" stroke-width="1"/>
<!-- fill bucket -->
<path d="M308 106.5 l4.5 -4.5 l5 5 l-4.5 4.5z" fill="#fff" stroke="#666" stroke-width="1"/>
<path d="M310 101 v4" stroke="#666" stroke-width="1"/>
<path d="M318 106 q2 2 1 4" fill="none" stroke="#2e75c6" stroke-width="1.5"/>
<rect x="306.5" y="112" width="15.5" height="4" fill="#ffff00"/>
<path d="M328 107.5h5l-2.5 2.5z" fill="#888"/>
<!-- font color -->
<text x="348" y="111.5" font-family="Liberation Sans" font-size="13" fill="#555" text-anchor="middle" stroke="#555" stroke-width="0.3">A</text>
<rect x="340" y="112" width="16" height="4" fill="#000"/>
<path d="M362 107.5h5l-2.5 2.5z" fill="#888"/>
<!-- launchers -->
<path d="M161.5 135.5h5v5M161.5 135.5v5h5" fill="none" stroke="#999" stroke-width="0.9"/>
<path d="M163 137l3 3" stroke="#999" stroke-width="0.9"/>
<path d="M366.5 135.5h5v5M366.5 135.5v5h5" fill="none" stroke="#999" stroke-width="0.9"/>
<path d="M368 137l3 3" stroke="#999" stroke-width="0.9"/>
<!-- alignment icon -->
<path d="M402 70.5h14M403.5 73.5h11M402 76.5h14M403.5 79.5h11" stroke="#555" stroke-width="1"/>
<path d="M406 117h5l-2.5 2.5z" fill="#888"/>
<path d="M464 117h5l-2.5 2.5z" fill="#888"/>
<!-- conditional formatting -->
<rect x="518.5" y="62.5" width="27" height="24" fill="#fff" stroke="#888" stroke-width="1"/>
<path d="M518.5 68.5h27M518.5 74.5h27M518.5 80.5h27M526.5 62.5v24M538.5 62.5v24" stroke="#aaa" stroke-width="1"/>
<rect x="526" y="63" width="6" height="5" fill="#e84c22"/>
<rect x="526" y="69" width="11" height="5" fill="#3a7dc9"/>
<rect x="526" y="75" width="9" height="5" fill="#e84c22"/>
<rect x="526" y="81" width="5" height="5" fill="#3a7dc9"/>
<rect x="531" y="78" width="18" height="15" fill="#fff"/>
<rect x="532.5" y="79.5" width="15" height="12" fill="#fff" stroke="#777" stroke-width="1"/>
<path d="M536 83.5h7M536 86.5h7M541.5 81.5l-4 8" stroke="#333" stroke-width="0.9" fill="none"/>
<!-- format as table -->
<rect x="585.5" y="64.5" width="24" height="20" fill="#fff" stroke="#888" stroke-width="1"/>
<rect x="591" y="70" width="18" height="14" fill="#bdd7ee"/>
<path d="M585.5 69.5h24M585.5 74.5h24M585.5 79.5h24M591.5 64.5v20M597.5 64.5v20M603.5 64.5v20" stroke="#888" stroke-width="1"/>
<g transform="translate(614,69.5) rotate(45)">
<path d="M-3.5 -1 h7 v13 h-7z M-3 13 h6 v4 h-6z M-4.5 18 q0 -1 4.5 -1 q4.5 0 4.5 1 q0 8 -4.5 13 q-4.5 -5 -4.5 -13z" fill="#fff"/>
<path d="M-2.5 0 l5 -1 v11 h-5z" fill="#777"/>
<rect x="-2" y="11.5" width="4" height="4" fill="#777"/>
<path d="M-3.5 18.5 q0 -1 3.5 -1 q3.5 0 3.5 1 q0 7 -3.5 12 q-3.5 -5 -3.5 -12z" fill="#3a7dc9"/>
<path d="M-1.5 19.5 q1.5 2 0 4" fill="none" stroke="#fff" stroke-width="0.9"/>
</g>
<!-- cell styles -->
<rect x="635.5" y="62.5" width="25" height="21" fill="#fff" stroke="#888" stroke-width="1"/>
<path d="M635.5 67.5h25M635.5 78.5h25M640.5 62.5v21M655.5 62.5v21" stroke="#888" stroke-width="1"/>
<rect x="641" y="68" width="14" height="10" fill="#bdd7ee"/>
<g transform="translate(663.5,68) rotate(45)">
<path d="M-3.5 -1 h7 v13 h-7z M-3 13 h6 v4 h-6z M-4.5 18 q0 -1 4.5 -1 q4.5 0 4.5 1 q0 8 -4.5 13 q-4.5 -5 -4.5 -13z" fill="#fff"/>
<path d="M-2.5 0 l5 -1 v11 h-5z" fill="#777"/>
<rect x="-2" y="11.5" width="4" height="4" fill="#777"/>
<path d="M-3.5 18.5 q0 -1 3.5 -1 q3.5 0 3.5 1 q0 7 -3.5 12 q-3.5 -5 -3.5 -12z" fill="#3a7dc9"/>
<path d="M-1.5 19.5 q1.5 2 0 4" fill="none" stroke="#fff" stroke-width="0.9"/>
</g>
<path d="M560 114.5h5l-2.5 2.5z" fill="#777"/>
<path d="M609 114.5h5l-2.5 2.5z" fill="#777"/>
<path d="M661 114.5h5l-2.5 2.5z" fill="#777"/>
<!-- cells icon -->
<path d="M689.5 68v3M703.5 68v3M690 69.5h13" stroke="#2e75c6" stroke-width="1"/>
<path d="M692 69.5l2.5 -2v4zM701 69.5l-2.5 -2v4z" fill="#2e75c6"/>
<rect x="689.5" y="72.5" width="14" height="11" rx="1" fill="#fff" stroke="#666" stroke-width="1"/>
<path d="M689.5 75.5h14M689.5 78.5h14M689.5 81.5h14M692.5 72.5v11M696.5 72.5v11M700.5 72.5v11" stroke="#aaa" stroke-width="1"/>
<rect x="692" y="75" width="5" height="4" fill="#2e75c6"/>
<path d="M693 117h6l-3 3z" fill="#888"/>
<!-- binoculars -->
<g fill="#6d6d6d">
<rect x="741" y="70" width="4" height="4"/><rect x="749" y="70" width="4" height="4"/>
<path d="M740.5 74h5v9h-6v-6z"/><path d="M753.5 74h-5v9h6v-6z"/>
<rect x="745" y="74.5" width="4" height="3.5"/>
</g>
<g fill="#bbb"><rect x="741" y="77" width="1" height="5"/><rect x="752" y="77" width="1" height="5"/><rect x="742" y="71" width="1" height="2"/><rect x="751" y="71" width="1" height="2"/></g>
<circle cx="747" cy="76" r="0.8" fill="#ccc"/>
<path d="M744 117h6l-3 3z" fill="#888"/>
<!-- collapse chevron -->
<path d="M864.5 141.5l4 -4 4 4" fill="none" stroke="#666" stroke-width="2"/>
<!-- name box chevron -->
<path d="M208 169.5l3 3 3 -3" fill="none" stroke="#444" stroke-width="1.5"/>
<circle cx="234" cy="166" r="0.9" fill="#999"/><circle cx="234" cy="171" r="0.9" fill="#999"/><circle cx="234" cy="176" r="0.9" fill="#999"/>
<path d="M264 167l7.5 7.5M271.5 167l-7.5 7.5" stroke="#bbb" stroke-width="1.3"/>
<path d="M299 171l3 3.5 6 -7" fill="none" stroke="#bbb" stroke-width="1.8"/>
<text x="340" y="175" font-family="Liberation Serif" font-style="italic" font-size="12" fill="#666" text-anchor="middle">fx</text>
<path d="M862.5 169l3.5 3.5 3.5 -3.5" fill="none" stroke="#666" stroke-width="1.8"/>
<!-- select all triangle -->
<path d="M108 198.5 V209.5 H97z" fill="#dcdcdc"/>
<!-- scroll arrows -->
<path d="M870.5 205h7l-3.5 -3.5z" fill="#777"/>
<path d="M870.5 682h7l-3.5 4z" fill="#777"/>
<path d="M575 704v7l-4 -3.5z" fill="#777"/>
<path d="M853 704v7l4 -3.5z" fill="#777"/>
<!-- sheet nav -->
<path d="M121.5 703.5v7l-3.5 -3.5z" fill="#087a48"/>
<path d="M147 703.5v7l3.5 -3.5z" fill="#087a48"/>
<circle cx="306" cy="706.8" r="7.3" fill="none" stroke="#888" stroke-width="1.1"/>
<path d="M302 706.8h8M306 702.8v8" stroke="#777" stroke-width="1.5"/>
<!-- status icons -->
<rect x="598.5" y="727.5" width="12" height="12" fill="none" stroke="#fff" stroke-width="1"/>
<path d="M602.5 727.5v12M606.5 727.5v12M598.5 731.5h12M598.5 735.5h12" stroke="#fff" stroke-width="1"/>
<rect x="636.5" y="727.5" width="13" height="12" fill="none" stroke="#fff" stroke-width="1"/>
<rect x="639.5" y="729.5" width="7" height="8" fill="none" stroke="#fff" stroke-width="1"/>
<rect x="641" y="731" width="4" height="1" fill="#fff"/><rect x="641" y="733" width="4" height="1" fill="#fff"/><rect x="641" y="735" width="4" height="1" fill="#fff"/>
<rect x="674.5" y="727.5" width="13" height="12" fill="none" stroke="#fff" stroke-width="1"/>
<rect x="675" y="728" width="3" height="8" fill="#fff"/>
<rect x="679" y="728" width="3" height="8" fill="#fff"/>
</svg>
</body></html>
